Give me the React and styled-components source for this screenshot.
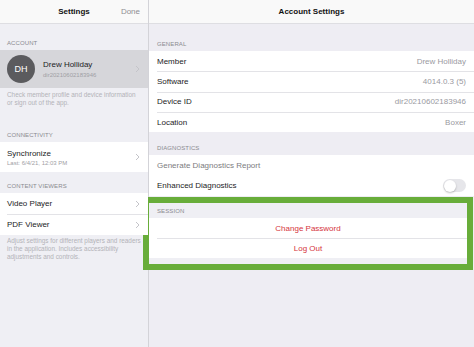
import React from 'react';
import styled, { createGlobalStyle } from 'styled-components';

const Global = createGlobalStyle`
  html, body { margin:0; padding:0; background:#efeff4; }
  body { font-family:"Liberation Sans", Arial, sans-serif; overflow:hidden; }
`

const Screen = styled.div`
  display:flex;
  width:474px;
  height:347px;
  background:#efeff4;
  overflow:hidden;
`

const Pane = styled.div`
  display:flex;
  flex-direction:column;
  width:${p => p.w};
  flex:${p => p.grow ? 1 : 'none'};
  background:${p => p.bg || '#efeff4'};
  border-right:${p => p.divider ? '1px solid #d3d3d8' : 'none'};
  box-sizing:border-box;
`

const NavBar = styled.div`
  display:grid;
  grid-template-columns:1fr auto 1fr;
  align-items:center;
  height:24px;
  padding:0 8px;
  background:#f9f9f9;
  border-bottom:1px solid #dedee2;
  box-sizing:border-box;
  font-size:8px;
`

const NavTitle = styled.div`
  grid-column:2;
  font-weight:700;
  color:#111;
`

const NavButton = styled.div`
  grid-column:3;
  justify-self:end;
  color:#8e8e93;
`

const SectionHeader = styled.div`
  padding:${p => p.top}px 8px 4px;
  font-size:6px;
  line-height:6px;
  letter-spacing:0.1px;
  color:#8a8a8f;
  text-transform:uppercase;
  padding-left:${p => p.left || 8}px;
`

const Group = styled.div`
  background:#fff;
`

const Row = styled.div`
  display:flex;
  align-items:center;
  justify-content:${p => p.center ? 'center' : 'space-between'};
  height:${p => p.h}px;
  padding:0 8px 0 ${p => p.left || 8}px;
  box-sizing:border-box;
  background:${p => p.selected ? '#d6d6da' : '#fff'};
  font-size:8px;
  color:${p => p.tone || '#1c1c1e'};
  position:relative;
  & + &::before {
    content:'';
    position:absolute;
    top:0;
    left:${p => p.left || 8}px;
    right:0;
    border-top:1px solid #e3e3e7;
  }
`

const Value = styled.span`
  color:#9a9a9f;
`

const Avatar = styled.div`
  width:28px;
  height:28px;
  border-radius:50%;
  background:#5b5b5e;
  color:#fff;
  font-size:9px;
  display:flex;
  align-items:center;
  justify-content:center;
  flex:none;
`

const Person = styled.div`
  display:flex;
  align-items:center;
  gap:8px;
`

const Lines = styled.div`
  display:flex;
  flex-direction:column;
  gap:${p => p.gap || 2}px;
`

const Name = styled.div`
  font-size:8px;
  color:#1c1c1e;
`

const Sub = styled.div`
  font-size:6px;
  color:#a0a0a5;
`

const Footnote = styled.div`
  padding:${p => p.top}px 2px 0 7px;
  font-size:6.4px;
  line-height:8px;
  color:#b3b3b8;
  white-space:nowrap;
`

const Highlight = styled.div`
  margin:1px 0 0 -6px;
  width:calc(100% + 5px);
  border:6px solid #68ad3a;
  box-sizing:border-box;
  background:#efeff4;
  padding-bottom:6px;
`

const Toggle = styled.div`
  width:23px;
  height:13px;
  border-radius:7px;
  background:#e6e6ea;
  position:relative;
  &::after {
    content:'';
    position:absolute;
    left:0.5px;
    top:0.5px;
    width:12px;
    height:12px;
    border-radius:50%;
    background:#fff;
    box-shadow:0 1px 2px rgba(0,0,0,.25);
  }
`

const Chevron = () => (
  <svg width="5" height="8" viewBox="0 0 5 8">
    <path d="M1 1l3 3-3 3" fill="none" stroke="#c4c4c9" strokeWidth="1" />
  </svg>
)

export default function App() {
  return (
    <Screen>
      <Global />
      <Pane w="149px" divider>
        <NavBar>
          <NavTitle>Settings</NavTitle>
          <NavButton>Done</NavButton>
        </NavBar>
        <SectionHeader top={16} left={7}>Account</SectionHeader>
        <Row h={38} left={7} selected>
          <Person>
            <Avatar>DH</Avatar>
            <Lines gap={3}>
              <Name>Drew Holliday</Name>
              <Sub>dir20210602183946</Sub>
            </Lines>
          </Person>
          <Chevron />
        </Row>
        <Footnote top={3}>
          Check member profile and device information<br />
          or sign out of the app.
        </Footnote>
        <SectionHeader top={25} left={7}>Connectivity</SectionHeader>
        <Group>
          <Row h={30} left={7}>
            <Lines gap={2}>
              <Name>Synchronize</Name>
              <Sub>Last: 6/4/21, 12:03 PM</Sub>
            </Lines>
            <Chevron />
          </Row>
        </Group>
        <SectionHeader top={11} left={7}>Content Viewers</SectionHeader>
        <Group>
          <Row h={21} left={7}>Video Player<Chevron /></Row>
          <Row h={21} left={7}>PDF Viewer<Chevron /></Row>
        </Group>
        <Footnote top={2}>
          Adjust settings for different players and readers<br />
          in the application. Includes accessibility<br />
          adjustments and controls.
        </Footnote>
      </Pane>
      <Pane grow bg="#eeedf3">
        <NavBar>
          <NavTitle>Account Settings</NavTitle>
        </NavBar>
        <SectionHeader top={17}>General</SectionHeader>
        <Group>
          <Row h={20.3}>Member<Value>Drew Holliday</Value></Row>
          <Row h={20.3}>Software<Value>4014.0.3 (5)</Value></Row>
          <Row h={20.3}>Device ID<Value>dir20210602183946</Value></Row>
          <Row h={20.3}>Location<Value>Boxer</Value></Row>
        </Group>
        <SectionHeader top={13}>Diagnostics</SectionHeader>
        <Group>
          <Row h={20.5} tone="#7c7c80">Generate Diagnostics Report</Row>
          <Row h={20.5}>Enhanced Diagnostics<Toggle /></Row>
        </Group>
        <Highlight>
          <SectionHeader top={5}>Session</SectionHeader>
          <Group>
            <Row h={20} center tone="#d5343c">Change Password</Row>
            <Row h={20} center tone="#d5343c">Log Out</Row>
          </Group>
        </Highlight>
      </Pane>
    </Screen>
  );
}
